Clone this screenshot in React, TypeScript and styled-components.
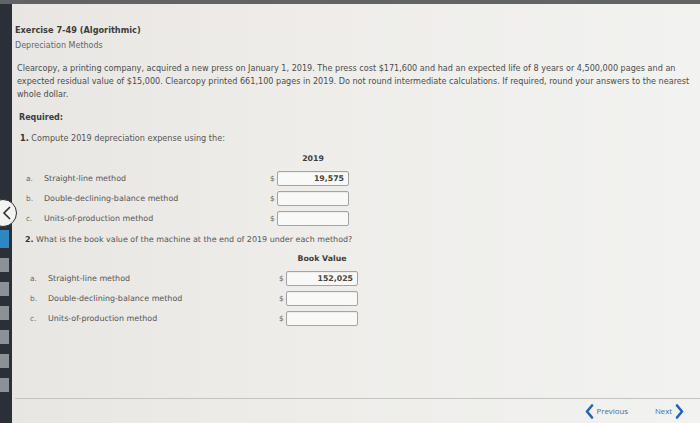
import React from 'react';
import styled, { createGlobalStyle } from 'styled-components';

const GlobalStyle = createGlobalStyle`
  html, body {
    margin: 0;
    padding: 0;
  }
  body {
    background: #ecebe8;
    font-family: "DejaVu Sans", Verdana, sans-serif;
  }
`;

const Screen = styled.div`
  position: relative;
  width: 700px;
  height: 423px;
  overflow: hidden;
  display: flex;
  flex-direction: column;
  background: linear-gradient(90deg, #e7e6e2 0%, #eeedea 45%, #f2f2f0 100%);
`;

const TopBar = styled.div`
  height: 4px;
  background: #626365;
  flex-shrink: 0;
`;

const Body = styled.div`
  flex: 1;
  display: flex;
`;

const Sidebar = styled.div`
  width: 12px;
  flex-shrink: 0;
  background: #2b2f36;
  display: flex;
  flex-direction: column;
  gap: 10px;
  padding-top: 226px;
`;

const SideBlock = styled.div<{ $active?: boolean }>`
  width: 9px;
  height: ${(p) => (p.$active ? 18 : 14)}px;
  background: ${(p) => (p.$active ? '#2f86c4' : '#8c9196')};
`;

const Main = styled.div`
  flex: 1;
  display: flex;
  flex-direction: column;
  padding-left: 3px;
`;

const Content = styled.div`
  flex: 1;
  padding-top: 20px;
  color: #4d4d4d;
`;

const Title = styled.div`
  font-weight: bold;
  font-size: 8.2px;
  color: #3d3d3d;
  line-height: 13px;
`;

const Subtitle = styled.div`
  font-size: 8px;
  color: #666;
  line-height: 13px;
  margin-top: 2px;
`;

const Paragraph = styled.p`
  margin: 10px 0 0 2px;
  font-size: 8.1px;
  line-height: 13px;
  color: #4c4c4c;
  width: 677px;
`;

const Required = styled.div`
  font-weight: bold;
  font-size: 8px;
  color: #3d3d3d;
  margin: 10px 0 0 4px;
  line-height: 13px;
`;

const Question = styled.div<{ $indent: number; $size: number }>`
  font-size: ${(p) => p.$size}px;
  color: #555;
  line-height: 13px;
  margin-left: ${(p) => p.$indent}px;
  b {
    color: #333;
  }
`;

const Table = styled.div<{ $indent: number; $label: number }>`
  display: grid;
  grid-template-columns: 18px ${(p) => p.$label}px 7px 72px;
  align-items: center;
  margin-left: ${(p) => p.$indent}px;
  row-gap: 5px;
`;

const HeaderCell = styled.div`
  grid-column: 4;
  text-align: center;
  font-weight: bold;
  font-size: 7.8px;
  color: #3d3d3d;
  line-height: 13px;
  margin-bottom: 1px;
`;

const Letter = styled.span`
  font-size: 7.4px;
  color: #6a6a6a;
`;

const Label = styled.span`
  font-size: 7.95px;
  color: #555;
`;

const Dollar = styled.span`
  font-size: 7.4px;
  color: #666;
`;

const Input = styled.div`
  height: 13px;
  border: 1px solid #a4a4a4;
  border-radius: 2px;
  background: #f9f9f8;
  box-shadow: inset 0 1px 1px rgba(0, 0, 0, 0.06);
  font-size: 7.8px;
  font-weight: bold;
  color: #444;
  text-align: right;
  padding-right: 4px;
  line-height: 13px;
`;

const Footer = styled.div`
  height: 24px;
  border-top: 1px solid #c4c4c2;
  display: flex;
  justify-content: flex-end;
  align-items: center;
  gap: 27px;
  padding-right: 16px;
`;

const NavButton = styled.span`
  display: flex;
  align-items: center;
  gap: 3px;
  font-family: "Open Sans", "Liberation Sans", sans-serif;
  font-size: 7.8px;
  color: #3b6fae;
`;

const BackCircle = styled.div`
  position: absolute;
  left: -11px;
  top: 199px;
  width: 28px;
  height: 28px;
  border: 1.5px solid #2e2e2e;
  border-radius: 50%;
  background: #f3f3f1;
  display: flex;
  align-items: center;
  justify-content: flex-end;
  padding-right: 4px;
  box-sizing: border-box;
`;

const Chevron = ({ dir }: { dir: 'left' | 'right' }) => (
  <svg width="9" height="15" viewBox="0 0 9 15">
    <path
      d={dir === 'left' ? 'M7 1.5 L2 7.5 L7 13.5' : 'M2 1.5 L7 7.5 L2 13.5'}
      fill="none"
      stroke="#2463b8"
      strokeWidth="2.6"
      strokeLinecap="round"
      strokeLinejoin="round"
    />
  </svg>
);

type Row = { letter: string; label: string; value?: string };

const part1: Row[] = [
  { letter: 'a.', label: 'Straight-line method', value: '19,575' },
  { letter: 'b.', label: 'Double-declining-balance method' },
  { letter: 'c.', label: 'Units-of-production method' },
];

const part2: Row[] = [
  { letter: 'a.', label: 'Straight-line method', value: '152,025' },
  { letter: 'b.', label: 'Double-declining-balance method' },
  { letter: 'c.', label: 'Units-of-production method' },
];

const AnswerTable = ({
  header,
  rows,
  indent,
  label,
}: {
  header: string;
  rows: Row[];
  indent: number;
  label: number;
}) => (
  <Table $indent={indent} $label={label}>
    <HeaderCell>{header}</HeaderCell>
    {rows.map((r) => (
      <React.Fragment key={r.letter}>
        <Letter>{r.letter}</Letter>
        <Label>{r.label}</Label>
        <Dollar>$</Dollar>
        <Input>{r.value}</Input>
      </React.Fragment>
    ))}
  </Table>
);

const Section = styled.div<{ $top: number }>`
  margin-top: ${(p) => p.$top}px;
`;

export default function App() {
  return (
    <>
      <GlobalStyle />
      <Screen>
        <TopBar />
        <Body>
          <Sidebar>
            <SideBlock $active />
            <SideBlock />
            <SideBlock />
            <SideBlock />
            <SideBlock />
            <SideBlock />
            <SideBlock />
          </Sidebar>
          <Main>
            <Content>
              <Title>Exercise 7-49 (Algorithmic)</Title>
              <Subtitle>Depreciation Methods</Subtitle>
              <Paragraph>
                Clearcopy, a printing company, acquired a new press on January 1, 2019. The press cost
                $171,600 and had an expected life of 8 years or 4,500,000 pages and an expected residual
                value of $15,000. Clearcopy printed 661,100 pages in 2019. Do not round intermediate
                calculations. If required, round your answers to the nearest whole dollar.
              </Paragraph>
              <Required>Required:</Required>
              <Section $top={8}>
                <Question $indent={5} $size={8.15}>
                  <b>1.</b> Compute 2019 depreciation expense using the:
                </Question>
              </Section>
              <Section $top={7}>
                <AnswerTable header="2019" rows={part1} indent={11} label={226} />
              </Section>
              <Section $top={7}>
                <Question $indent={10} $size={7.97}>
                  <b>2.</b> What is the book value of the machine at the end of 2019 under each method?
                </Question>
              </Section>
              <Section $top={6}>
                <AnswerTable header="Book Value" rows={part2} indent={15} label={231} />
              </Section>
            </Content>
            <Footer>
              <NavButton>
                <Chevron dir="left" />
                Previous
              </NavButton>
              <NavButton>
                Next
                <Chevron dir="right" />
              </NavButton>
            </Footer>
          </Main>
        </Body>
        <BackCircle>
          <svg width="10" height="14" viewBox="0 0 10 14">
            <path d="M8 1 L2 7 L8 13" fill="none" stroke="#2e2e2e" strokeWidth="1.6" />
          </svg>
        </BackCircle>
      </Screen>
    </>
  );
}
